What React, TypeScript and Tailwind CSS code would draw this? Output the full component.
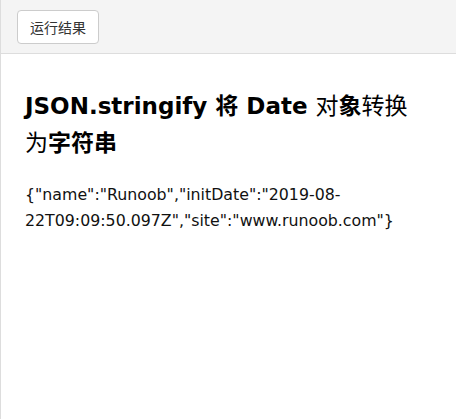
import React from "react";

// Result preview panel: toolbar with a tab button, then the rendered output
export default function App() {
  const json =
    '{"name":"Runoob","initDate":"2019-08-22T09:09:50.097Z","site":"www.runoob.com"}';

  return (
    <div className="w-[456px] h-[419px] bg-white border-l border-[#dddddd] flex flex-col overflow-hidden">
      <div className="h-[54px] shrink-0 bg-[#f4f4f4] border-b border-[#dddddd] flex items-center pl-[16px]">
        <button className="h-[34px] px-[12px] bg-white border border-[#cccccc] rounded-[4px] text-[14px] text-[#333333] font-['Noto_Sans_CJK_SC',sans-serif] leading-none">
          运行结果
        </button>
      </div>

      <div className="pl-[24px] pr-[36px] pt-[34px]">
        <h1 className="text-[23px] leading-[37px] font-bold text-black font-['DejaVu_Sans','Noto_Sans_CJK_SC',sans-serif]">
          JSON.stringify 将 Date <span className="font-normal">对</span>象
          <span className="font-normal">转换为</span>字符串
        </h1>
        <p className="mt-[20px] text-[15.8px] leading-[26px] text-[#111111] font-['DejaVu_Sans','Noto_Sans_CJK_SC',sans-serif]">
          {json}
        </p>
      </div>
    </div>
  );
}
